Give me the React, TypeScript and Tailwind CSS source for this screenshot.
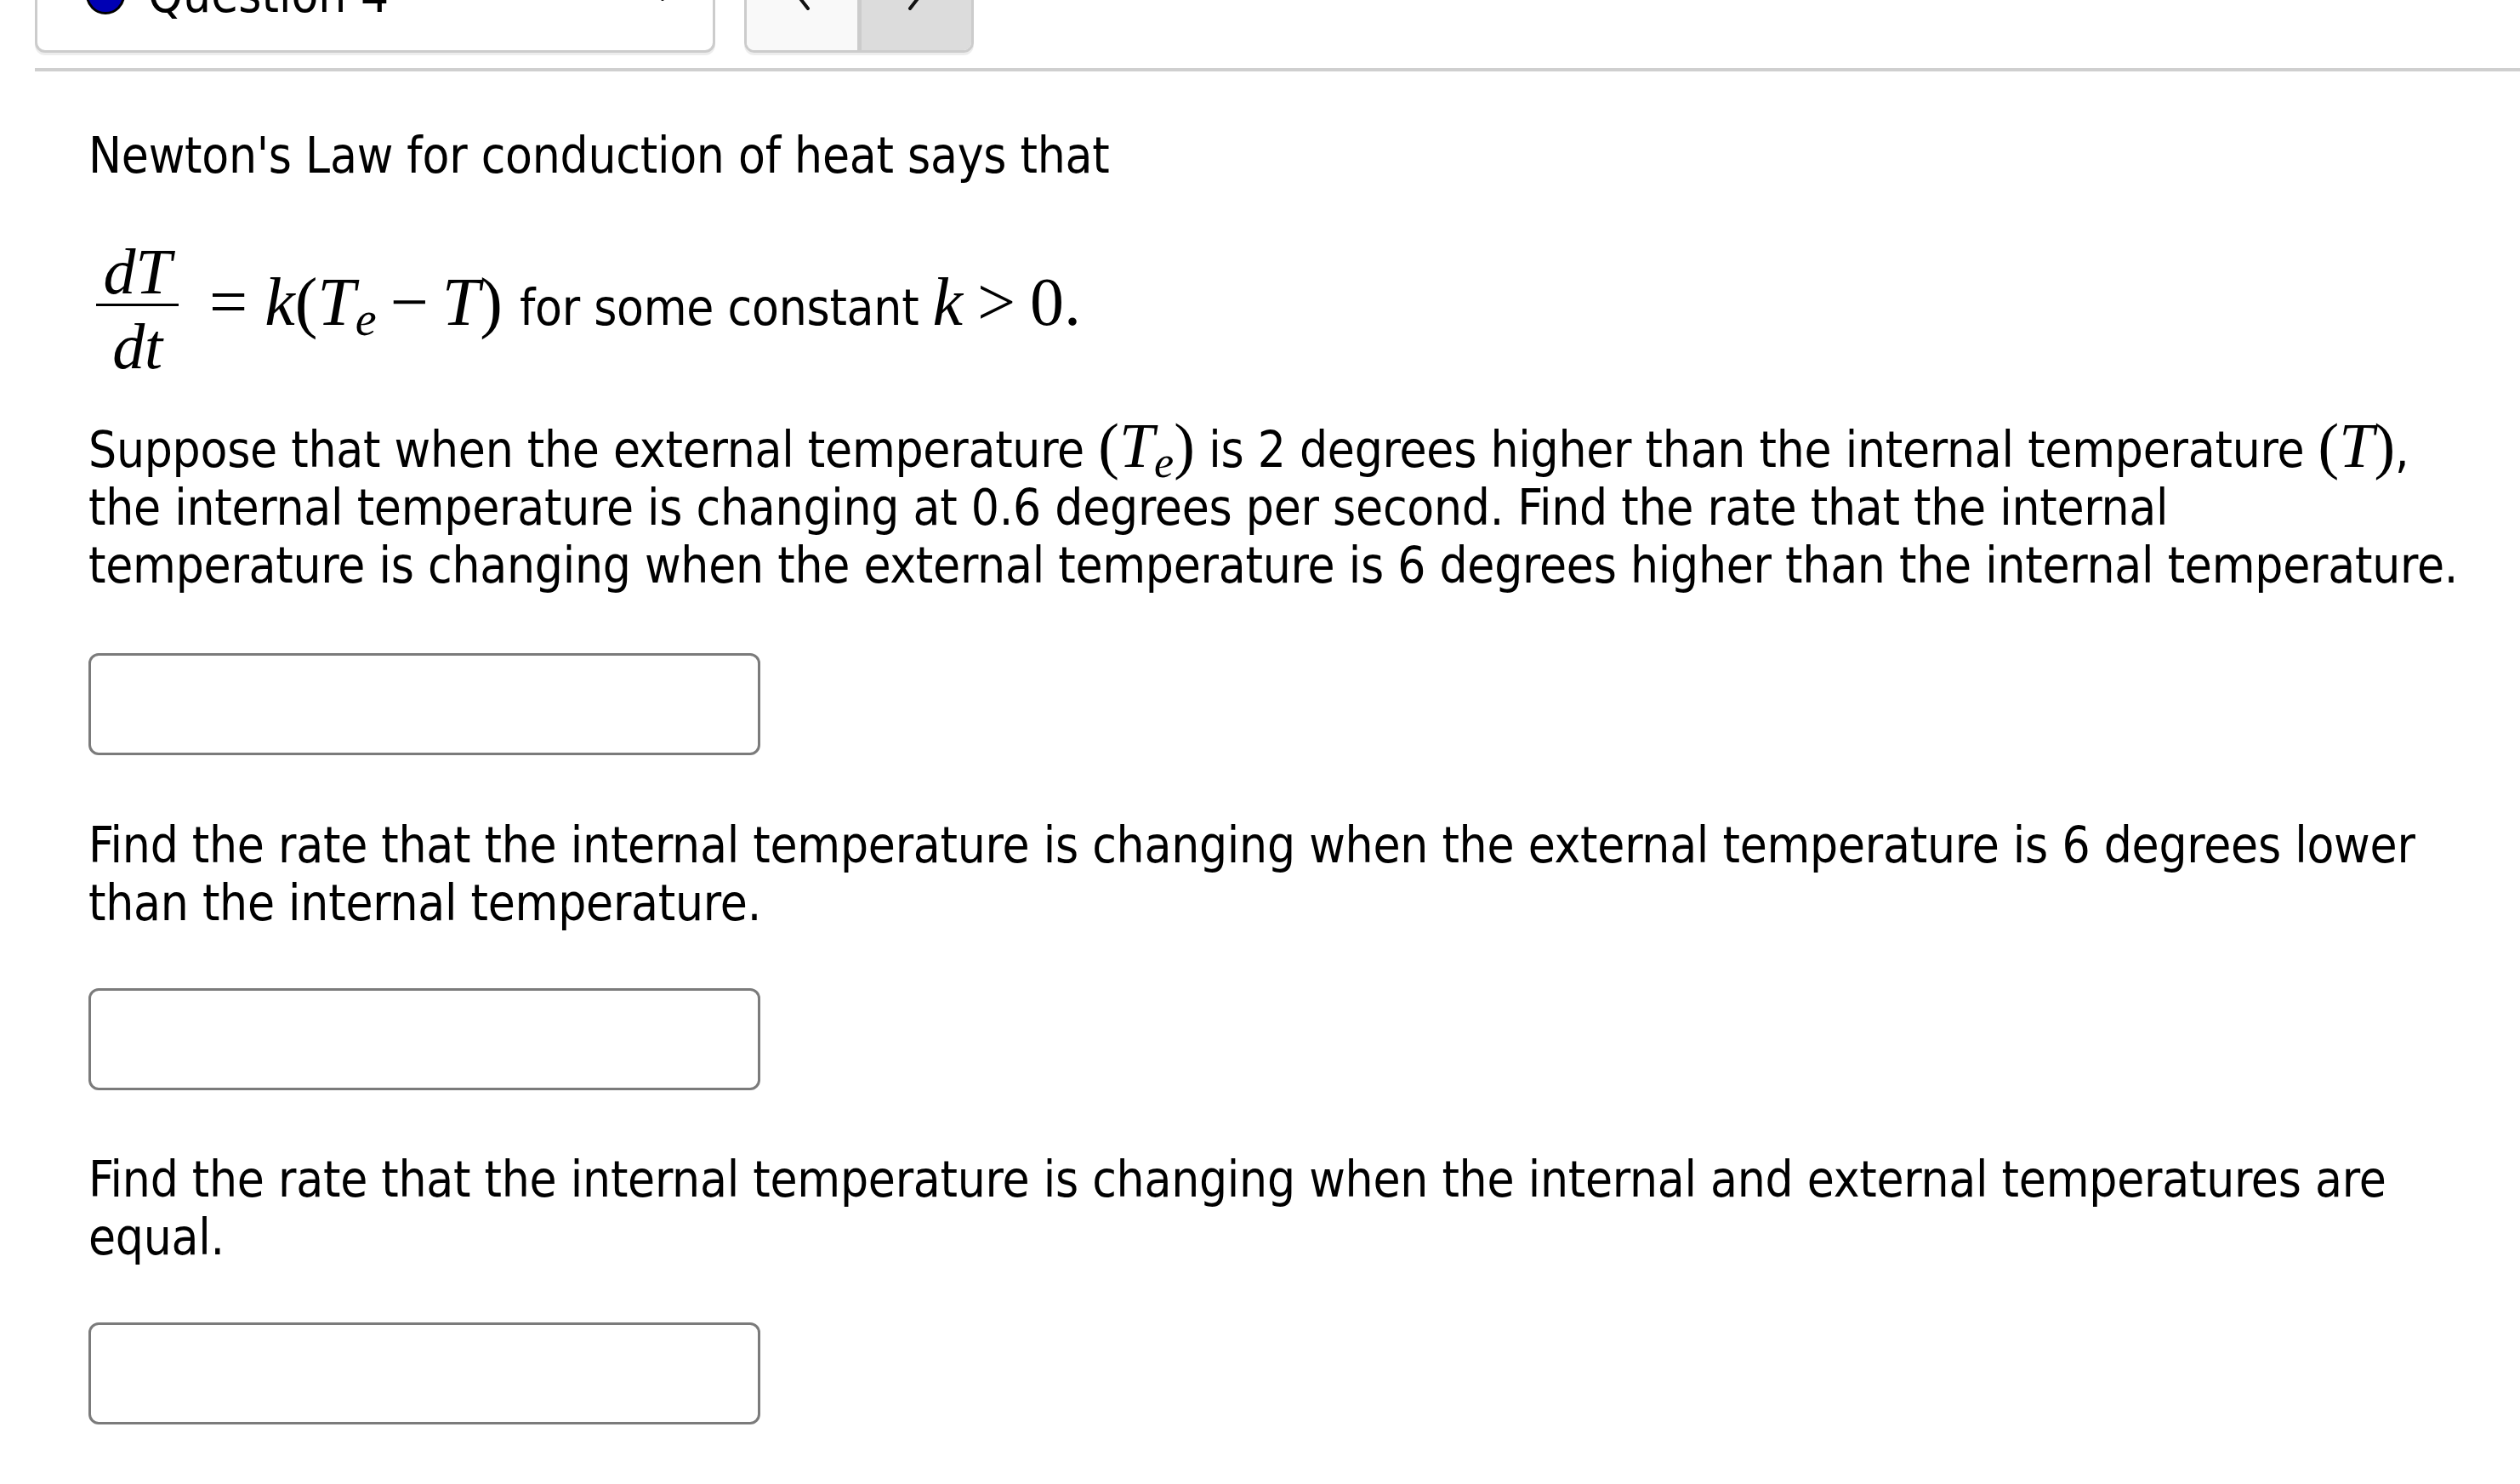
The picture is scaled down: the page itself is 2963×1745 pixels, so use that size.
import React from "react";

const serif = "font-['Liberation_Serif','Times_New_Roman',serif]";

// inline math piece, kept out of the line box height
const Mi = ({ children, size = "text-[74px]" }: { children: React.ReactNode; size?: string }) => (
  <span className={`${serif} italic ${size} leading-[0] tracking-normal`}>{children}</span>
);
const Mr = ({ children, size = "text-[74px]" }: { children: React.ReactNode; size?: string }) => (
  <span className={`${serif} not-italic ${size} leading-[0] tracking-normal`}>{children}</span>
);
const Sub = ({ children, size = "text-[52px]" }: { children: React.ReactNode; size?: string }) => (
  <span className={`${serif} italic ${size} leading-[0] align-[-12px] tracking-normal`}>{children}</span>
);

const AnswerBox = () => (
  <input
    type="text"
    className="block w-[790px] h-[120px] border-[3px] border-[#7b7b7b] rounded-[12px] bg-white outline-none"
  />
);

const Header = () => (
  <div>
    <div className="flex items-start pl-[41px] gap-[34px] h-[62px]">
      {/* question selector */}
      <div className="-mt-[62px] h-[124px] w-[800px] flex items-center pb-[12px] pl-[57px] pr-[46px] border-[3px] border-[#cccccc] rounded-[12px] bg-white shadow-[0_3px_0_rgba(0,0,0,0.07)]">
        <span className="w-[46px] h-[46px] rounded-full bg-[#0000b4] border-[3px] border-black shrink-0" />
        <span className="ml-[27px] text-[58px] leading-none">Question 4</span>
        <svg className="ml-auto" width="26" height="16" viewBox="0 0 26 16" fill="none">
          <path d="M3 3l10 10 10-10" stroke="#111" strokeWidth="4" strokeLinecap="round" strokeLinejoin="round" />
        </svg>
      </div>
      {/* prev / next */}
      <div className="-mt-[62px] h-[124px] w-[270px] flex border-[3px] border-[#cccccc] rounded-[12px] overflow-hidden shadow-[0_3px_0_rgba(0,0,0,0.07)]">
        <div className="flex-1 bg-[#f9f9f9] flex items-center justify-center pb-[16px]">
          <svg width="26" height="44" viewBox="0 0 26 44" fill="none">
            <path d="M20 4L6 22l14 18" stroke="#111" strokeWidth="4" strokeLinecap="round" strokeLinejoin="round" />
          </svg>
        </div>
        <div className="flex-1 bg-[#dcdcdc] border-l-[5px] border-[#cccccc] flex items-center justify-center pb-[16px]">
          <svg width="26" height="44" viewBox="0 0 26 44" fill="none">
            <path d="M6 4l14 18L6 40" stroke="#111" strokeWidth="4" strokeLinecap="round" strokeLinejoin="round" />
          </svg>
        </div>
      </div>
    </div>
    <div className="mt-[18px] ml-[41px] h-[4px] bg-[#cfcfcf]" />
  </div>
);

const Equation = () => (
  <div className="mt-[64px] flex items-center">
    <div className={`${serif} italic text-[76px] flex flex-col items-center w-[97px] ml-[9px]`}>
      <span className="leading-none">dT</span>
      <span className="block w-full h-[3px] bg-black" />
      <span className="leading-none mt-[9px]">dt</span>
    </div>
    <span className="mt-[-2px] whitespace-nowrap">
      <Mr size="text-[80px]">
        <span className="ml-[36px] mr-[20px]">=</span>
      </Mr>
      <Mi size="text-[80px]">k</Mi>
      <Mr size="text-[80px]">(</Mr>
      <Mi size="text-[80px]">T</Mi>
      <Sub size="text-[56px]">e</Sub>
      <Mr size="text-[80px]">
        <span className="mx-[16px]">−</span>
      </Mr>
      <Mi size="text-[80px]">T</Mi>
      <Mr size="text-[80px]">)</Mr>
      <span className="ml-[20px]">for some constant</span>
      <Mi size="text-[80px]">
        <span className="ml-[16px]">k</span>
      </Mi>
      <Mr size="text-[80px]">
        <span className="mx-[17px]">&gt;</span>0.
      </Mr>
    </span>
  </div>
);

export default function App() {
  return (
    <div className="min-h-screen w-full bg-white text-black font-['DejaVu_Sans_Condensed','DejaVu_Sans',sans-serif] font-stretch-condensed overflow-hidden">
      <Header />
      <div className="pl-[104px] text-[58px] leading-[68px] tracking-[-0.25px] whitespace-nowrap">
        <p className="mt-[65px]">Newton's Law for conduction of heat says that</p>

        <Equation />

        <p className="mt-[50px]">
          Suppose that when the external temperature <Mr>(</Mr>
          <Mi>T</Mi>
          <Sub>e</Sub>
          <Mr>)</Mr> is 2 degrees higher than the internal temperature <Mr>(</Mr>
          <Mi>T</Mi>
          <Mr>)</Mr>,
          <br />
          the internal temperature is changing at 0.6 degrees per second. Find the rate that the internal
          <br />
          temperature is changing when the external temperature is 6 degrees higher than the internal temperature.
        </p>
        <div className="mt-[69px]">
          <AnswerBox />
        </div>

        <p className="mt-[72px]">
          Find the rate that the internal temperature is changing when the external temperature is 6 degrees lower
          <br />
          than the internal temperature.
        </p>
        <div className="mt-[66px]">
          <AnswerBox />
        </div>

        <p className="mt-[71px]">
          Find the rate that the internal temperature is changing when the internal and external temperatures are
          <br />
          equal.
        </p>
        <div className="mt-[66px]">
          <AnswerBox />
        </div>
      </div>
    </div>
  );
}
